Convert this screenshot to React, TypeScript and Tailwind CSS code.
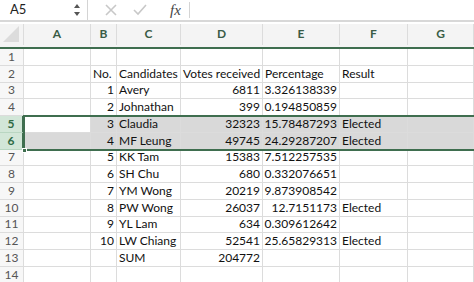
import { useState } from "react";

type Row = [string, string, string, string, string];

const rows: Row[] = [
  ["", "", "", "", ""],
  ["No.", "Candidates", "Votes received", "Percentage", "Result"],
  ["1", "Avery", "6811", "3.326138339", ""],
  ["2", "Johnathan", "399", "0.194850859", ""],
  ["3", "Claudia", "32323", "15.78487293", "Elected"],
  ["4", "MF Leung", "49745", "24.29287207", "Elected"],
  ["5", "KK Tam", "15383", "7.512257535", ""],
  ["6", "SH Chu", "680", "0.332076651", ""],
  ["7", "YM Wong", "20219", "9.873908542", ""],
  ["8", "PW Wong", "26037", "12.7151173", "Elected"],
  ["9", "YL Lam", "634", "0.309612642", ""],
  ["10", "LW Chiang", "52541", "25.65829313", "Elected"],
  ["", "SUM", "204772", "", ""],
  ["", "", "", "", ""],
];

const columns = ["A", "B", "C", "D", "E", "F", "G"];
const gridCols = "grid-cols-[24px_67px_26px_64px_82px_77px_68px_1fr]";

function isNumeric(v: string) {
  return /^[0-9.]+$/.test(v);
}

function Cell({ value, selected, active }: { value: string; selected: boolean; active?: boolean }) {
  const align = isNumeric(value) ? "justify-end pr-[2px]" : "justify-start pl-[2px]";
  const bg = selected && !active ? "bg-[#d9d9d9]" : "bg-white";
  return (
    <div className={`flex h-[16.75px] items-center overflow-hidden whitespace-nowrap border-r border-b border-[#dcdcdc] ${bg} ${align}`}>
      {value}
    </div>
  );
}

export default function App() {
  const [activeRow] = useState(5);

  return (
    <div className="h-[282px] w-[474px] overflow-hidden bg-white text-[12px] text-[#111] [font-family:Lato,'Liberation_Sans',sans-serif]">
      {/* formula bar */}
      <div className="flex h-[22px] items-center border-b-2 border-[#d8d8d8] bg-white">
        <div className="flex h-full w-[88px] items-center justify-between border-r border-[#d4d4d4] pl-[10px] pr-[6px]">
          <span className="text-[13px] text-[#222]">A5</span>
          <svg width="8" height="16" viewBox="0 0 8 16" className="text-[#555]">
            <path d="M4 2 L7 6 L1 6 Z" fill="currentColor" />
            <path d="M4 14 L7 10 L1 10 Z" fill="currentColor" />
          </svg>
        </div>
        <div className="flex items-center gap-[14px] pl-[16px]">
          <svg width="14" height="14" viewBox="0 0 14 14" stroke="#c8c8c8" strokeWidth="1.6" fill="none">
            <path d="M2 2 L12 12 M12 2 L2 12" />
          </svg>
          <svg width="16" height="14" viewBox="0 0 16 14" stroke="#c8c8c8" strokeWidth="1.6" fill="none">
            <path d="M2 7 L6 11 L14 2" />
          </svg>
          <span className="ml-[8px] italic text-[15px] text-[#444] [font-family:'Liberation_Serif',serif]">fx</span>
        </div>
        <div className="ml-[8px] h-[16px] border-l border-[#d4d4d4]" />
      </div>

      {/* column header */}
      <div className={`mt-[2px] grid ${gridCols} h-[25px] border-b-2 border-[#3f6e4f] bg-[#f4f4f4]`}>
        <div className="relative border-r border-[#dcdcdc]">
          <svg width="16" height="16" viewBox="0 0 16 16" className="absolute bottom-[3px] right-[4px]">
            <path d="M16 0 L16 16 L0 16 Z" fill="#dcdcdc" />
          </svg>
        </div>
        {columns.map((c) => (
          <div key={c} className="flex items-center justify-center border-r border-[#dcdcdc] text-[12px] font-bold text-[#3a5c46]">
            {c}
          </div>
        ))}
        <div />
      </div>

      {/* body */}
      <div className="relative">
        {rows.map((r, i) => {
          const n = i + 1;
          const selected = n === 5 || n === 6;
          return (
            <div key={n} className={`grid ${gridCols}`}>
              <div
                className={`flex h-[16.75px] items-center justify-center border-b text-[12px] ${
                  selected
                    ? "border-[#b9d6c2] border-r-2 border-r-[#3f6e4f] bg-[#d2e6d8] font-bold text-[#2f6b45]"
                    : "border-[#dcdcdc] border-r border-r-[#dcdcdc] bg-[#f7f7f7] text-[#555]"
                }`}
              >
                {n}
              </div>
              <Cell value="" selected={selected} active={n === activeRow} />
              {r.map((v, j) => (
                <Cell key={j} value={v} selected={selected} />
              ))}
              <Cell value="" selected={selected} />
            </div>
          );
        })}
        {/* selection outline */}
        <div className="pointer-events-none absolute left-[23px] right-[-2px] top-[66px] h-[35.5px] border-2 border-[#3f6e4f]" />
        <div className="pointer-events-none absolute left-[22px] top-[98.5px] h-[5px] w-[5px] border border-white bg-[#3f6e4f]" />
      </div>
    </div>
  );
}
